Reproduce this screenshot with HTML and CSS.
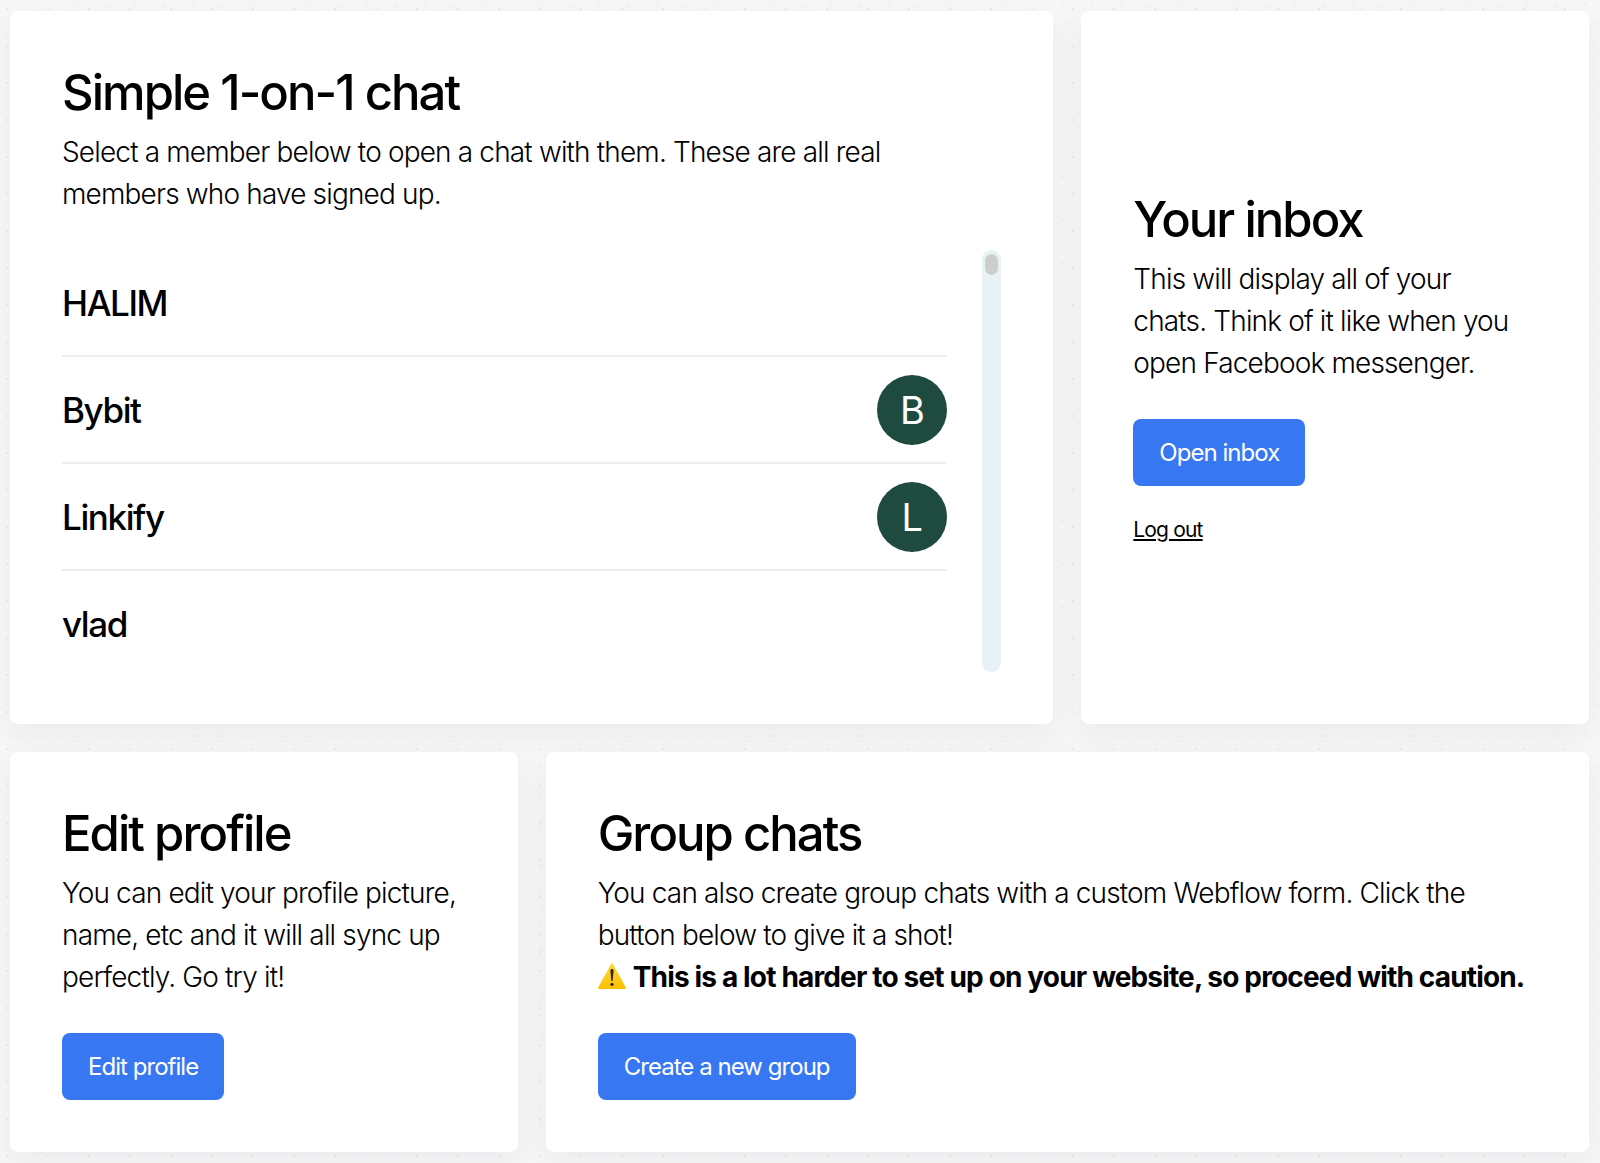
FILE: index.html
```html
<!DOCTYPE html>
<html lang="en">
<head>
    <meta charset="UTF-8">
    <meta name="viewport" content="width=device-width, initial-scale=1.0">
    <title>Member chat</title>
    <link rel="stylesheet" href="styles.css">
</head>
<body>
    <main class="grid">
        <section class="card wide">
            <h1>Simple 1-on-1 chat</h1>
            <p>Select a member below to open a chat with them. These are all real members who have signed up.</p>
            <div class="member-box">
                <ul class="members">
                    <li><a href="#">HALIM</a></li>
                    <li><a href="#">Bybit <span class="avatar">B</span></a></li>
                    <li><a href="#">Linkify <span class="avatar">L</span></a></li>
                    <li><a href="#">vlad</a></li>
                </ul>
                <div class="scrollbar"><div class="thumb"></div></div>
            </div>
        </section>

        <section class="card inbox">
            <h1>Your inbox</h1>
            <p>This will display all of your chats. Think of it like when you open Facebook messenger.</p>
            <button class="btn" type="button">Open inbox</button>
            <a class="logout" href="#">Log out</a>
        </section>

        <section class="card">
            <h1>Edit profile</h1>
            <p>You can edit your profile picture, name, etc and it will all sync up perfectly. Go try it!</p>
            <button class="btn" type="button">Edit profile</button>
        </section>

        <section class="card wide">
            <h1>Group chats</h1>
            <p>You can also create group chats with a custom Webflow form. Click the button below to give it a shot!<br>
                <svg class="warning" viewBox="0 0 28 26" aria-hidden="true">
                    <defs>
                        <linearGradient id="yellow" x1="0" y1="0" x2="0" y2="1">
                            <stop offset="0" stop-color="#ffd83a"/>
                            <stop offset="1" stop-color="#fcc000"/>
                        </linearGradient>
                    </defs>
                    <path d="M13.1.9a1 1 0 0 1 1.8 0l12.9 23.6a1 1 0 0 1-.9 1.4H1.1a1 1 0 0 1-.9-1.4z" fill="url(#yellow)"/>
                    <path d="M12.4 7.4c0-2 3.2-2 3.2 0l-.9 10a.7.7 0 0 1-1.4 0z" fill="#2e2810"/>
                    <circle cx="14" cy="21.3" r="1.6" fill="#2e2810"/>
                </svg>
                <strong>This is a lot harder to set up on your website, so proceed with caution.</strong></p>
            <button class="btn" type="button">Create a new group</button>
        </section>
    </main>
</body>
</html>
```
FILE: styles.css
```css
* {
    box-sizing: border-box;
}

body {
    margin: 0;
    padding: 11px 11px 11px 10px;
    background-color: #f7f7f7;
    /* light paper speckle */
    background-image:
        radial-gradient(circle at 7px 9px, #f9e6d8 1px, transparent 1px),
        radial-gradient(circle at 19px 5px, #f6ece5 1px, transparent 1px),
        radial-gradient(circle at 11px 23px, #f2eeef 1px, transparent 1px),
        radial-gradient(circle at 29px 17px, #f8e8dc 1px, transparent 1px);
    background-size: 41px 37px, 29px 43px, 23px 31px, 53px 47px;
    color: #000;
    font-family: Inter, sans-serif;
    letter-spacing: -0.04em;
}

.grid {
    display: grid;
    grid-template-columns: repeat(3, 1fr);
    gap: 28px;
}

.card {
    display: flex;
    flex-direction: column;
    align-items: flex-start;
    padding: 52px;
    background-color: #fff;
    border-radius: 8px;
    box-shadow: 0 10px 30px rgba(30, 20, 70, 0.06);
}

.wide {
    grid-column: span 2;
}

.inbox {
    justify-content: center;
    padding-right: 72px;
}

h1 {
    margin: 0 0 8px;
    font-size: 49px;
    font-weight: 500;
    line-height: 60px;
    letter-spacing: -0.04em;
}

p {
    margin: 0 0 35px;
    font-size: 28px;
    font-weight: 300;
    line-height: 42px;
    letter-spacing: -0.03em;
}

strong {
    font-weight: 700;
}

.warning {
    width: 28px;
    height: 26px;
    vertical-align: -2px;
}

.member-box {
    display: flex;
    gap: 35px;
    width: 100%;
    height: 422px;
}

.members {
    flex: 1;
    margin: 0;
    padding: 0;
    overflow: hidden;
    list-style: none;
}

.members li + li {
    border-top: 2px solid #eee;
}

.members a {
    display: flex;
    align-items: center;
    justify-content: space-between;
    height: 105px;
    color: #000;
    font-size: 35px;
    font-weight: 500;
    letter-spacing: -0.04em;
    text-decoration: none;
}

.avatar {
    width: 70px;
    height: 70px;
    border-radius: 50%;
    background-color: #1f4a40;
    color: #fff;
    font-size: 38px;
    font-weight: 400;
    line-height: 70px;
    letter-spacing: 0;
    text-align: center;
}

.scrollbar {
    width: 19px;
    padding: 4px 3px;
    border-radius: 10px;
    background-color: #e8f2f4;
}

.thumb {
    height: 21px;
    border-radius: 7px;
    background-color: #cdcdcd;
}

.btn {
    height: 67px;
    padding: 0 26px;
    border: none;
    border-radius: 8px;
    background-color: #3877f2;
    color: #fff;
    font-family: inherit;
    font-size: 24px;
    letter-spacing: -0.04em;
    cursor: pointer;
}

.logout {
    margin-top: 28px;
    color: #000;
    font-size: 21px;
    line-height: 32px;
    letter-spacing: -0.04em;
}
```
